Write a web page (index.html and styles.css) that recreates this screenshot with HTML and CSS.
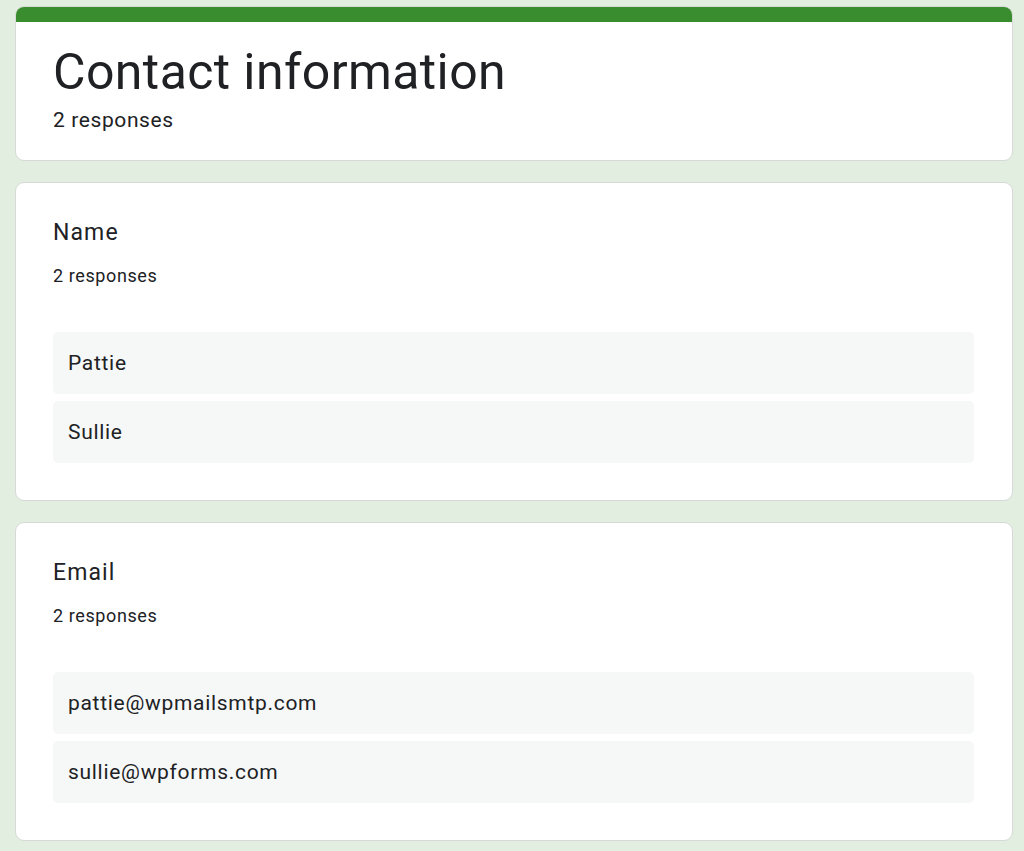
FILE: index.html
```html
<!DOCTYPE html>
<html lang="en">
<head>
    <meta charset="UTF-8">
    <meta name="viewport" content="width=device-width, initial-scale=1.0">
    <title>Contact information</title>
    <link rel="stylesheet" href="styles.css">
</head>
<body>
    <div class="page">
        <div class="card header-card">
            <div class="header-bar"></div>
            <div class="header-body">
                <h1>Contact information</h1>
                <div class="count count-large">2 responses</div>
            </div>
        </div>

        <div class="card question">
            <div class="question-title">Name</div>
            <div class="count">2 responses</div>
            <div class="answers">
                <div class="answer">Pattie</div>
                <div class="answer">Sullie</div>
            </div>
        </div>

        <div class="card question">
            <div class="question-title">Email</div>
            <div class="count">2 responses</div>
            <div class="answers">
                <div class="answer">pattie@wpmailsmtp.com</div>
                <div class="answer">sullie@wpforms.com</div>
            </div>
        </div>
    </div>
</body>
</html>
```

FILE: styles.css
```css
body {
    font-family: Roboto, "Liberation Sans", sans-serif;
    background-color: #e2eee0;
    color: #202124;
    margin: 0;
    padding: 0;
}

.page {
    display: flex;
    flex-direction: column;
    gap: 21px;
    padding: 6px 11px 20px 15px;
}

.card {
    background-color: #fff;
    border: 1px solid #d6dad6;
    border-radius: 9px;
    overflow: hidden;
}

.header-bar {
    height: 16px;
    background-color: #3a8d2f;
    margin: -1px -1px 0 -1px;
}

.header-body {
    padding: 20px 38px 28px 37px;
}

h1 {
    font-size: 50px;
    font-weight: 400;
    letter-spacing: 0.4px;
    line-height: 60px;
    margin: 0 0 6px 0;
}

.count {
    font-size: 18px;
    letter-spacing: 0.6px;
    line-height: 24px;
}

.count-large {
    font-size: 21px;
    letter-spacing: 0.6px;
}

.question {
    padding: 34px 38px 37px 37px;
}

.question-title {
    font-size: 23px;
    letter-spacing: 1.1px;
    line-height: 32px;
    margin-bottom: 15px;
}

.answers {
    display: flex;
    flex-direction: column;
    gap: 7px;
    margin-top: 44px;
}

.answer {
    background-color: #f6f8f7;
    border-radius: 5px;
    height: 62px;
    line-height: 62px;
    padding: 0 15px;
    font-size: 21px;
    letter-spacing: 0.7px;
}
```
